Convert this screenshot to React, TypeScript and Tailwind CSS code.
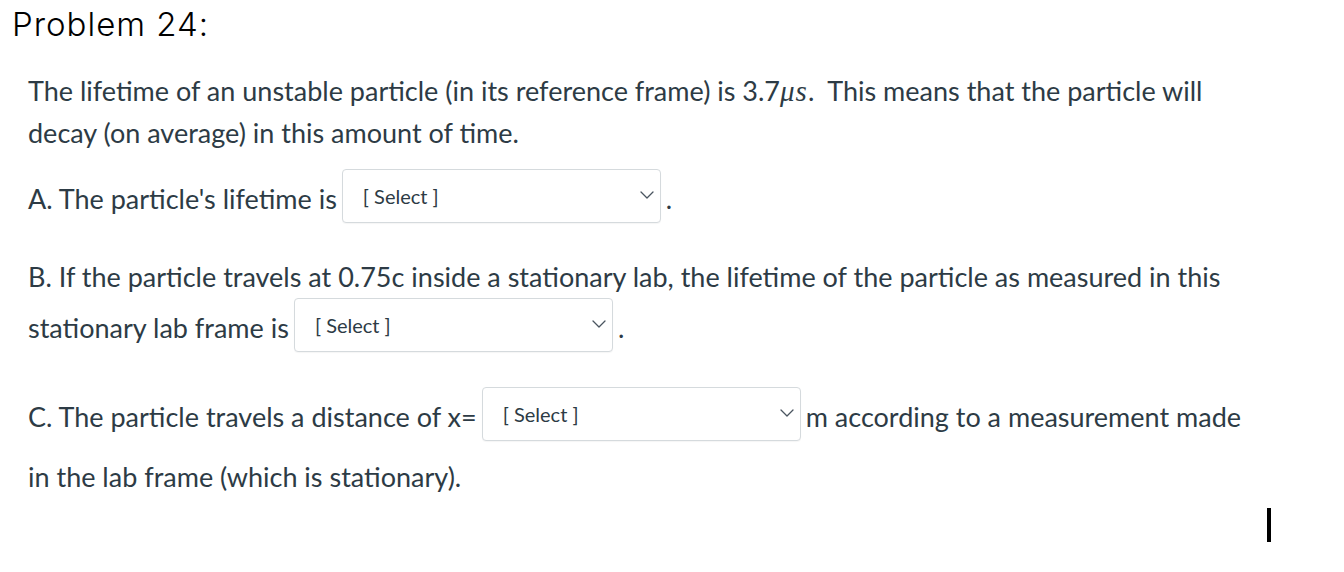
function Select() {
  return (
    <span className="inline-flex items-center justify-between align-[5px] w-[319px] h-[54px] mx-[5px] pl-[20px] pr-[6px] bg-white border border-[#d5dadd] rounded-[4px] text-[20px] text-[#2d3b45] shadow-[0_1px_1px_rgba(0,0,0,0.04)]">
      <span>[ Select ]</span>
      <svg width="14" height="8" viewBox="0 0 14 8" fill="none" className="mb-[2px]">
        <path d="M1 1l6 6 6-6" stroke="#4a5560" strokeWidth="1.3" strokeLinecap="round" strokeLinejoin="round" />
      </svg>
    </span>
  )
}

export default function App() {
  return (
    <div className="relative w-[1344px] h-[572px] bg-white overflow-hidden">
      <h2 className="pl-[12px] pt-[4px] text-[33px] leading-[40px] text-black font-['Inter',sans-serif] font-light tracking-[1px]">
        Problem 24:
      </h2>
      <div className="pl-[28px] pr-[89px] font-['Lato',sans-serif] text-[27px] leading-[42px] text-[#2d3b45]">
        <p className="mt-[26px]">
          The lifetime of an unstable particle (in its reference frame) is 3.7
          <span className="font-['Liberation_Serif',serif] italic text-[29px] tracking-[1px]">μs</span>.&nbsp; This means that the particle will decay (on average) in this amount of time.
        </p>
        <p className="mt-[15px]">
          A. The particle's lifetime is
          <Select />.
        </p>
        <p className="mt-[33px] leading-[42px]">
          B. If the particle travels at 0.75c inside a stationary lab, the lifetime of the particle as measured in this stationary lab frame is
          <Select />.
        </p>
        <p className="mt-[35px] leading-[60px]">
          C. The particle travels a distance of x=
          <Select />m according to a measurement made in the lab frame (which is stationary).
        </p>
      </div>
      <div className="absolute left-[1267px] top-[508px] w-[4px] h-[34px] bg-black" />
    </div>
  )
}
